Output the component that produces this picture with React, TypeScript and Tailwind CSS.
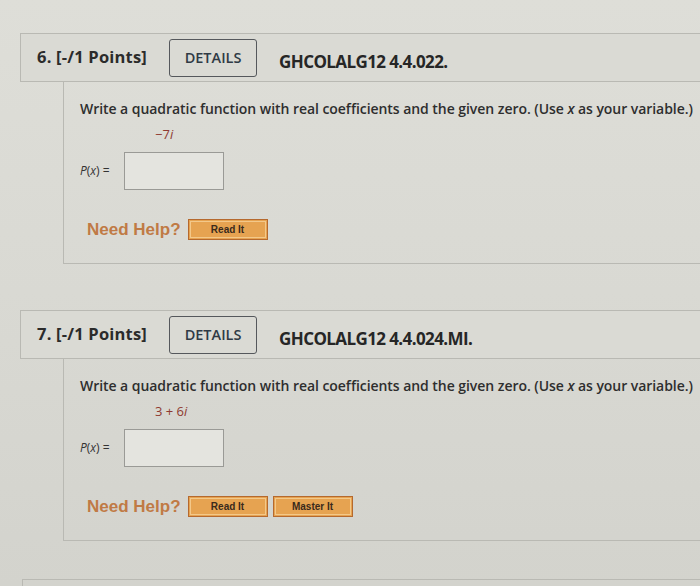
const font = { fontFamily: '"Open Sans", "DejaVu Sans", sans-serif' }

function HelpButton({ label }: { label: string }) {
  return (
    <div className="h-[21px] w-[80px] border border-[#b5692e] bg-[#e6a351] p-[1px]">
      <div className="flex h-full items-center justify-center border border-[#f3c88a] text-[10px] font-bold text-[#3a2a1c] [font-family:'Liberation_Sans',Arial,sans-serif]">
        {label}
      </div>
    </div>
  )
}

function Question({
  num,
  code,
  zero,
  buttons,
}: {
  num: number
  code: string
  zero: React.ReactNode
  buttons: string[]
}) {
  return (
    <div className="ml-[20px]">
      {/* header band */}
      <div className="flex h-[49px] items-center border-y border-l border-[#b9b9b3] bg-[#dadad4] pl-[16px]">
        <span className="text-[16.5px] font-bold tracking-[0.2px] text-[#2b2b2b]">
          {num}. [-/1 Points]
        </span>
        <div className="ml-[22px] flex h-[38px] w-[88px] items-center justify-center rounded-[3px] border border-[#55585c] text-[14.5px] font-semibold text-[#2f3a45]">
          DETAILS
        </div>
        <span className="ml-[22px] mt-[8px] text-[17px] font-bold tracking-[-0.6px] text-[#262626]">{code}</span>
      </div>
      {/* body */}
      <div className="ml-[43px] h-[182px] border-b border-l border-[#b9b9b3] pl-[16px] pt-[16px]">
        <p className="whitespace-nowrap text-[14px] font-semibold tracking-[-0.05px] text-[#2e2e2e]">
          Write a quadratic function with real coefficients and the given zero. (Use <i>x</i> as your variable.)
        </p>
        <div className="ml-[75px] mt-[6px] text-[13px] text-[#8f3a30]">{zero}</div>
        <div className="mt-[7px] flex items-center">
          <span className="text-[12px] text-[#333]">
            <i>P</i>(<i>x</i>) =
          </span>
          <div className="ml-[14px] h-[38px] w-[100px] border border-[#9a9a96] bg-[#e4e4df]" />
        </div>
        <div className="ml-[7px] mt-[27px] flex items-center gap-[5px]">
          <span className="mr-[2px] text-[17px] font-bold text-[#c07a45] [font-family:'Liberation_Sans',Arial,sans-serif]">
            Need Help?
          </span>
          {buttons.map((b) => (
            <HelpButton key={b} label={b} />
          ))}
        </div>
      </div>
    </div>
  )
}

export default function App() {
  return (
    <div
      className="h-[586px] w-[700px] overflow-hidden bg-gradient-to-b from-[#dedeD8] via-[#d9d9d3] to-[#d3d3cd] pt-[33px]"
      style={font}
    >
      <Question
        num={6}
        code="GHCOLALG12 4.4.022."
        zero={
          <span>
            −7<i>i</i>
          </span>
        }
        buttons={['Read It']}
      />
      <div className="h-[46px]" />
      <Question
        num={7}
        code="GHCOLALG12 4.4.024.MI."
        zero={
          <span>
            3 + 6<i>i</i>
          </span>
        }
        buttons={['Read It', 'Master It']}
      />
      <div className="ml-[22px] mt-[38px] h-[20px] border-l border-t border-[#b9b9b3]" />
    </div>
  )
}
